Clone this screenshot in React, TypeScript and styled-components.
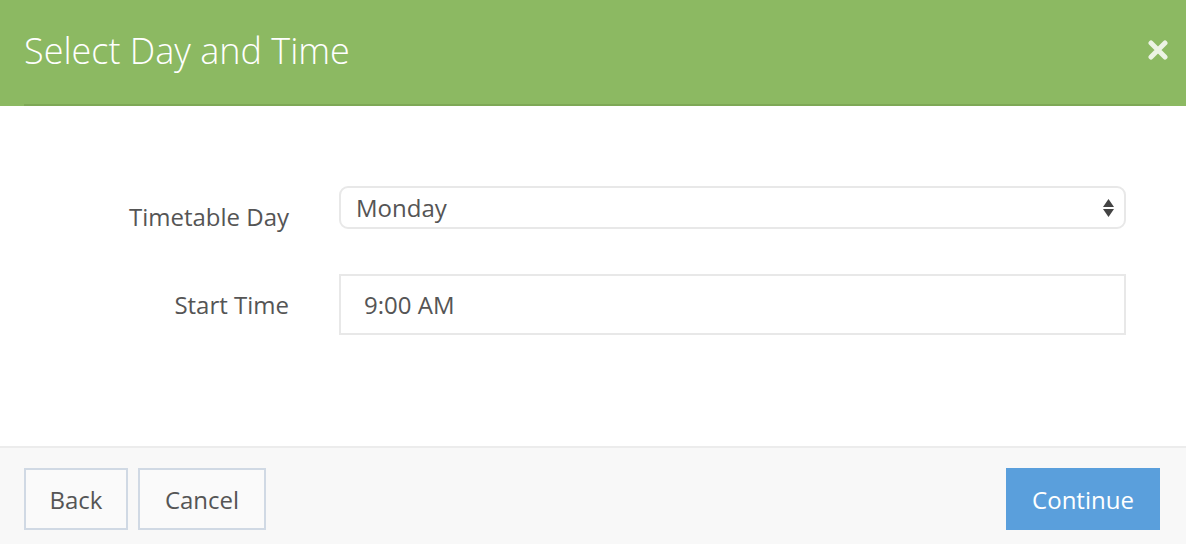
import React from "react";
import styled, { createGlobalStyle } from "styled-components";

const Global = createGlobalStyle`
    html, body {
        margin: 0;
        padding: 0;
        background: #fff;
        font-family: "Open Sans", "Liberation Sans", sans-serif;
    }
    * {
        box-sizing: border-box;
    }
`;

const Modal = styled.div`
    width: 1186px;
    height: 544px;
    display: flex;
    flex-direction: column;
    background: white;
    overflow: hidden;
`;

const Header = styled.div`
    background: #8cb962;
    padding: 0 26px 0 24px;
    height: 106px;
`;

const HeaderInner = styled.div`
    height: 106px;
    display: flex;
    align-items: center;
    justify-content: space-between;
    border-bottom: 2px solid #7ea856;
    padding-bottom: 4px;
`;

const Title = styled.h1`
    margin: 0 0 0 0;
    font-weight: 300;
    font-size: 36px;
    color: #fff;
`;

const Close = styled.button`
    border: none;
    background: none;
    padding: 0;
    margin-right: -9px;
    width: 22px;
    height: 22px;
    display: flex;
    align-items: center;
    justify-content: center;
    cursor: pointer;
`;

const Body = styled.div`
    flex: 1;
    padding: 80px 60px 0 0;
    display: flex;
    flex-direction: column;
    gap: 27px;
`;

const FormRow = styled.div`
    display: grid;
    grid-template-columns: 289px 1fr;
    column-gap: 50px;
    height: 61px;
`;

const Label = styled.label`
    text-align: right;
    align-self: center;
    font-size: 24px;
    color: #555;
`;

const SelectBox = styled.div`
    height: 43px;
    border: 2px solid #e8e8e8;
    border-radius: 9px;
    display: flex;
    align-items: center;
    justify-content: space-between;
    padding: 0 10px 0 15px;
    font-size: 24px;
    color: #555;
`;

const Arrows = styled.div`
    display: flex;
    flex-direction: column;
    gap: 2px;
`;

const TextBox = styled.div`
    height: 61px;
    border: 2px solid #e8e8e8;
    display: flex;
    align-items: center;
    padding: 0 23px;
    font-size: 24px;
    color: #555;
`;

const Footer = styled.div`
    height: 98px;
    background: #f8f8f8;
    border-top: 2px solid #ececec;
    padding: 20px 26px 0 24px;
    display: flex;
    justify-content: space-between;
    align-items: flex-start;
`;

const Group = styled.div`
    display: flex;
    gap: 10px;
`;

const Button = styled.button<{ $primary?: boolean; $w: number }>`
    width: ${(p) => p.$w}px;
    height: 62px;
    font-family: "Open Sans", "Liberation Sans", sans-serif;
    font-size: 24px;
    cursor: pointer;
    border: 2px solid ${(p) => (p.$primary ? "#5a9fdc" : "#d0d9e4")};
    background: ${(p) => (p.$primary ? "#5a9fdc" : "#fafafa")};
    color: ${(p) => (p.$primary ? "#fff" : "#555")};
    padding: 0;
`;

export default function App() {
    return (
        <Modal>
            <Global />
            <Header>
                <HeaderInner>
                    <Title>Select Day and Time</Title>
                    <Close aria-label="close">
                        <svg width="20" height="20" viewBox="0 0 20 20">
                            <path d="M3 3 L17 17 M17 3 L3 17" stroke="#ecf3e4" strokeWidth="5" strokeLinecap="round" />
                        </svg>
                    </Close>
                </HeaderInner>
            </Header>
            <Body>
                <FormRow>
                    <Label>Timetable Day</Label>
                    <SelectBox>
                        <span>Monday</span>
                        <Arrows>
                            <svg width="11" height="8" viewBox="0 0 11 8"><path d="M5.5 0 L11 8 L0 8 Z" fill="#444" /></svg>
                            <svg width="11" height="8" viewBox="0 0 11 8"><path d="M0 0 L11 0 L5.5 8 Z" fill="#444" /></svg>
                        </Arrows>
                    </SelectBox>
                </FormRow>
                <FormRow>
                    <Label>Start Time</Label>
                    <TextBox>9:00 AM</TextBox>
                </FormRow>
            </Body>
            <Footer>
                <Group>
                    <Button $w={104}>Back</Button>
                    <Button $w={128}>Cancel</Button>
                </Group>
                <Button $primary $w={154}>Continue</Button>
            </Footer>
        </Modal>
    );
}
